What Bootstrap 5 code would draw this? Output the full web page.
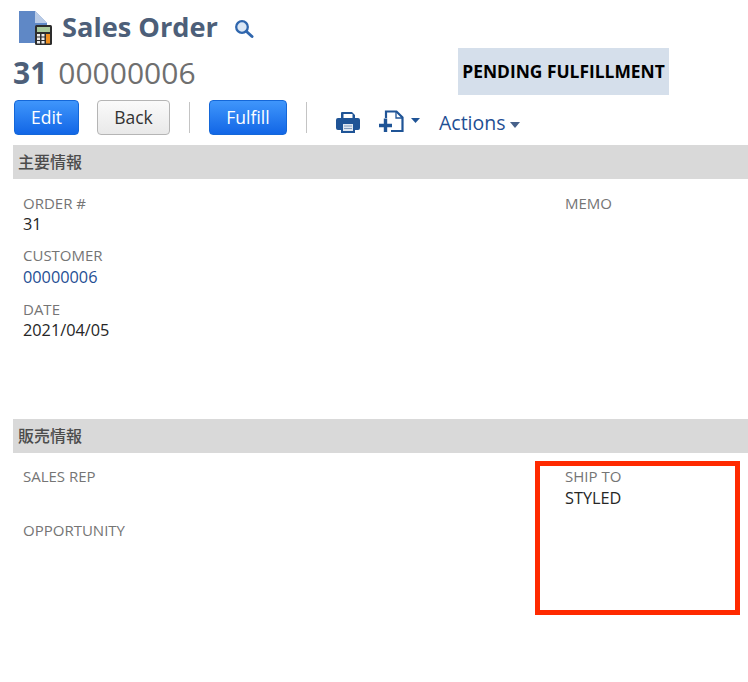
<!DOCTYPE html>
<html lang="en"><head><meta charset="utf-8"><title>Sales Order</title>
<link href="https://cdn.jsdelivr.net/npm/bootstrap@5.3.0/dist/css/bootstrap.min.css" rel="stylesheet">
<style>
html,body{height:100%}
body{font-family:"Open Sans","Noto Sans CJK JP",sans-serif;color:#262626;font-size:16px;line-height:21px;background:#fff;overflow:hidden;position:relative}
.page-wrap{padding:10px 0 0 13px}
.title-row{height:36px;padding-left:5px;gap:10px}
.title-text{font-size:27.2px;line-height:34px;font-weight:700;color:#4d5f79;margin:0 0 2px;white-space:nowrap}
.search-ic{margin-left:6px;margin-top:2px}
.id-row{height:48px;margin-top:1px}
.id-left{width:445px;font-size:30px;line-height:48px;padding-top:4px;color:#6f6f6f;white-space:nowrap}
.id-left b{color:#4d5f79;font-weight:700;margin-right:11px}
.status-box{background:#d5dfeb;color:#000;font-weight:700;font-size:17.4px;height:47px;width:211px;line-height:47px;text-align:center;white-space:nowrap}
.tool-row{height:34px;margin-top:5px;margin-left:1px}
.act-btn{height:35px;border-radius:4px;font-size:17.5px;line-height:33px;padding:0;font-weight:500;text-align:center}
.act-blue{background:linear-gradient(#3f96fb,#1266e6);border:1px solid #1467d8;color:#fff}
.act-grey{background:linear-gradient(#fafafa,#e9e9e9);border:1px solid #b5b5b5;color:#333}
.w-edit{width:65px}.w-back{width:73px;margin-left:18px}.w-ful{width:78px}
.sep{width:1px;height:31px;background:#c4c4c4}
.sep-a{margin:0 19px}.sep-b{margin:0 29px 0 19px}
.print-ic{margin-top:10px}
.add-ic{margin-left:19px;margin-top:10px}
.act-link{font-size:19.5px;line-height:34px;color:#1f4f94;margin-left:18px;margin-top:11px;text-decoration:none;white-space:nowrap}
.caret-ic{margin-left:4px;vertical-align:2px}
.sec-bar{background:#d9d9d9;height:34px;line-height:34px;font-size:16px;font-weight:500;color:#4c4c4c;padding-left:5px}
.bar-one{margin-top:11px}
.bar-two{margin-top:0}
.field-area{height:240px;padding:14px 0 0 10px}
.field-area-b{padding-top:13px}
.col-l{width:542px}
.fld{height:54px}
.fld.tight{height:52px}
.fld-label{font-size:15px;line-height:21px;color:#757575;text-transform:uppercase;white-space:nowrap}
.fld-val{font-size:16.3px;line-height:21px;color:#262626}
.fld-val.drop{line-height:23px}
.fld-val a{color:#1f4f94;text-decoration:none}
.ship-val{width:57px;overflow:hidden;white-space:nowrap}
.red-frame{position:absolute;left:535px;top:461px;width:205px;height:154px;border:5px solid #ff2a00}
</style></head>
<body>
<div class="page-wrap">
  <div class="d-flex align-items-center title-row">
    <svg width="34" height="36" viewBox="0 0 34 36">
      <path d="M1 1H17L29 13V33H1Z" fill="#5f88c6"/>
      <path d="M17 1L29 13H17Z" fill="#b9cbe6"/>
      <rect x="17" y="15" width="17" height="20" rx="1.5" fill="#2d2d2d"/>
      <rect x="19" y="17" width="13" height="5" fill="#a9c99a"/>
      <g fill="#eee"><rect x="19" y="24" width="3" height="2.5"/><rect x="23.500" y="24" width="3" height="2.500"/><rect x="19" y="27.500" width="3" height="2.500"/><rect x="23.500" y="27.500" width="3" height="2.500"/><rect x="19" y="31" width="3" height="2.500"/><rect x="23.500" y="31" width="3" height="2.500"/></g>
      <rect x="28" y="24" width="4" height="9.500" fill="#ee8f1f"/>
    </svg>
    <h1 class="title-text">Sales Order</h1>
    <svg class="search-ic" width="20" height="20" viewBox="0 0 20 20"><circle cx="8" cy="8" r="5.800" fill="#dbe7f5" stroke="#2f66ad" stroke-width="2.300"/><path d="M12.500 12.500L18 17.500" stroke="#2f66ad" stroke-width="3" stroke-linecap="round"/></svg>
  </div>
  <div class="d-flex align-items-center id-row">
    <div class="id-left"><b>31</b>00000006</div>
    <div class="status-box">PENDING FULFILLMENT</div>
  </div>
  <div class="d-flex align-items-center tool-row">
    <button type="button" class="act-btn act-blue w-edit">Edit</button>
    <button type="button" class="act-btn act-grey w-back">Back</button>
    <span class="sep sep-a"></span>
    <button type="button" class="act-btn act-blue w-ful">Fulfill</button>
    <span class="sep sep-b"></span>
    <svg class="print-ic" width="24" height="23" viewBox="0 0 24 23"><path d="M5 7V2a1 1 0 0 1 1-1H16l3 3V7H22a2 2 0 0 1 2 2V17a2 2 0 0 1-2 2H19V22H5V19H2A2 2 0 0 1 0 17V9A2 2 0 0 1 2 7Z" fill="#1f5496"/><rect x="7.500" y="3" width="9" height="4" fill="#fff"/><rect x="7" y="13" width="10" height="7" fill="#dfe7f0"/><path d="M8 15H16M8 17.500H16" stroke="#7f9abc"/></svg>
    <svg class="add-ic" width="42" height="24" viewBox="0 0 42 24"><path d="M7 8V1.500H17.500L23.500 7.500V21H12" fill="none" stroke="#1f5496" stroke-width="2.200"/><path d="M17 2V8H23" fill="none" stroke="#1f5496" stroke-width="1.300"/><path d="M6.500 8.500V22M0 15.500H13" stroke="#1f5496" stroke-width="3.400"/><path d="M32 8H41L36.500 13Z" fill="#1f5496"/></svg>
    <a href="#" class="act-link">Actions<svg class="caret-ic" width="10" height="6" viewBox="0 0 10 6"><path d="M0 0H10L5 6Z" fill="#47618a"/></svg></a>
  </div>
  <div class="sec-bar bar-one">主要情報</div>
  <div class="d-flex field-area">
    <div class="col-l">
      <div class="fld tight"><div class="fld-label">Order #</div><div class="fld-val">31</div></div>
      <div class="fld"><div class="fld-label">Customer</div><div class="fld-val drop"><a href="#">00000006</a></div></div>
      <div class="fld"><div class="fld-label">Date</div><div class="fld-val">2021/04/05</div></div>
    </div>
    <div><div class="fld-label">Memo</div></div>
  </div>
  <div class="sec-bar bar-two">販売情報</div>
  <div class="d-flex field-area field-area-b">
    <div class="col-l">
      <div class="fld"><div class="fld-label">Sales Rep</div></div>
      <div class="fld"><div class="fld-label">Opportunity</div></div>
    </div>
    <div><div class="fld-label">Ship To</div><div class="fld-val ship-val drop">STYLED:</div></div>
  </div>
</div>
<div class="red-frame"></div>
<script src="https://cdn.jsdelivr.net/npm/bootstrap@5.3.0/dist/js/bootstrap.bundle.min.js"></script>
</body></html>
